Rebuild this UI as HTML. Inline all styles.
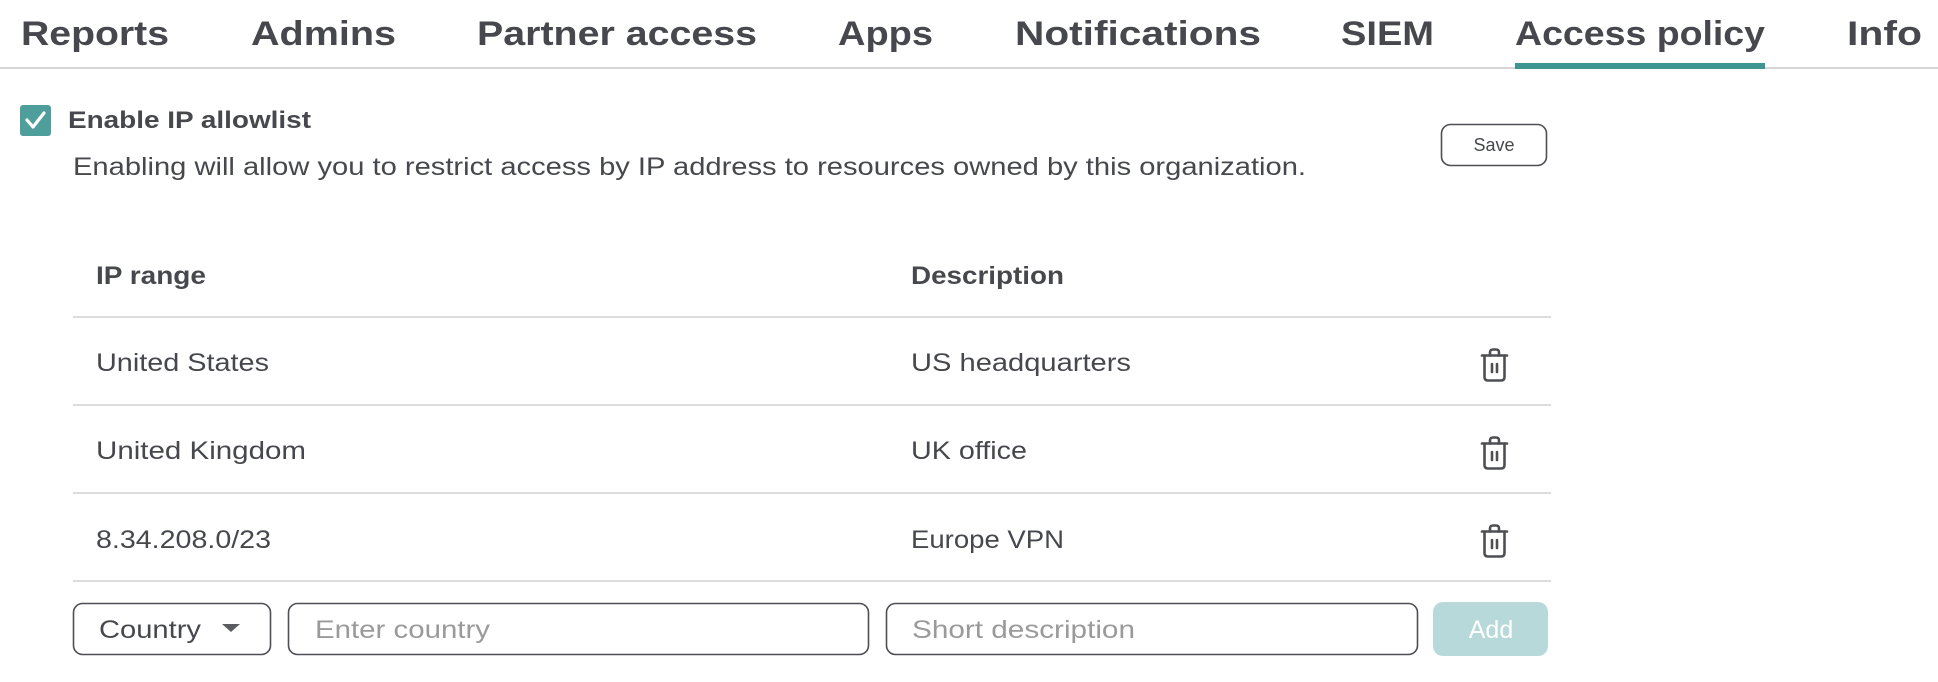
<!DOCTYPE html>
<html><head><meta charset="utf-8"><style>
html,body{margin:0;padding:0;background:#fff;width:1938px;height:682px;overflow:hidden}
svg{display:block}
text{font-family:"Liberation Sans",sans-serif;fill:#46484d}
</style></head><body>
<svg width="1938" height="682" viewBox="0 0 1938 682" xmlns="http://www.w3.org/2000/svg">
<defs>
<g id="trash" fill="none" stroke="#4d4f54" stroke-width="2.6" stroke-linecap="round" stroke-linejoin="round">
<path d="M1 7.5H26"/>
<path d="M9 7.5V4.5Q9 1.5 12 1.5H15Q18 1.5 18 4.5V7.5"/>
<path d="M3.5 7.5V29Q3.5 32.5 7 32.5H20Q23.5 32.5 23.5 29V7.5"/>
<path d="M11 16V24M16 16V24"/>
</g>
</defs>
<g font-weight="bold" font-size="34">
<text x="21" y="45" textLength="148" lengthAdjust="spacingAndGlyphs">Reports</text>
<text x="251" y="45" textLength="145" lengthAdjust="spacingAndGlyphs">Admins</text>
<text x="477" y="45" textLength="280" lengthAdjust="spacingAndGlyphs">Partner access</text>
<text x="838" y="45" textLength="95" lengthAdjust="spacingAndGlyphs">Apps</text>
<text x="1015" y="45" textLength="246" lengthAdjust="spacingAndGlyphs">Notifications</text>
<text x="1341" y="45" textLength="93" lengthAdjust="spacingAndGlyphs">SIEM</text>
<text x="1515" y="45" textLength="250" lengthAdjust="spacingAndGlyphs">Access policy</text>
<text x="1847" y="45" textLength="75" lengthAdjust="spacingAndGlyphs">Info</text>
</g>
<rect x="0" y="67" width="1938" height="2" fill="#d6d6d6"/>
<rect x="1515" y="63" width="250" height="6" fill="#3f9592"/>
<rect x="20" y="105" width="31" height="31" rx="3" fill="#4e9e9c"/>
<path d="M27 120L33 127L44 113" fill="none" stroke="#fff" stroke-width="3.2" stroke-linecap="round" stroke-linejoin="round"/>
<text x="68" y="128" font-size="24" font-weight="bold" textLength="243" lengthAdjust="spacingAndGlyphs">Enable IP allowlist</text>
<text x="73" y="175" font-size="25" textLength="1233" lengthAdjust="spacingAndGlyphs">Enabling will allow you to restrict access by IP address to resources owned by this organization.</text>
<rect x="1441.5" y="124.5" width="105" height="41" rx="9" fill="#fff" stroke="#4d4f54" stroke-width="1.6"/>
<text x="1494" y="151" font-size="18" text-anchor="middle">Save</text>
<text x="96" y="284" font-size="25" font-weight="bold" textLength="110" lengthAdjust="spacingAndGlyphs">IP range</text>
<text x="911" y="284" font-size="25" font-weight="bold" textLength="153" lengthAdjust="spacingAndGlyphs">Description</text>
<rect x="73" y="316" width="1478" height="2" fill="#dcdcdc"/>
<rect x="73" y="404" width="1478" height="2" fill="#dcdcdc"/>
<rect x="73" y="492" width="1478" height="2" fill="#dcdcdc"/>
<rect x="73" y="580" width="1478" height="2" fill="#dcdcdc"/>
<g font-size="25">
<text x="96" y="371" textLength="173" lengthAdjust="spacingAndGlyphs">United States</text>
<text x="911" y="371" textLength="220" lengthAdjust="spacingAndGlyphs">US headquarters</text>
<text x="96" y="459" textLength="210" lengthAdjust="spacingAndGlyphs">United Kingdom</text>
<text x="911" y="459" textLength="116" lengthAdjust="spacingAndGlyphs">UK office</text>
<text x="96" y="548" textLength="175" lengthAdjust="spacingAndGlyphs">8.34.208.0/23</text>
<text x="911" y="548" textLength="153" lengthAdjust="spacingAndGlyphs">Europe VPN</text>
</g>
<use href="#trash" x="1481" y="348"/>
<use href="#trash" x="1481" y="436"/>
<use href="#trash" x="1481" y="524"/>
<rect x="73.5" y="603.5" width="197" height="51" rx="9" fill="#fff" stroke="#4d4f54" stroke-width="1.6"/>
<text x="99" y="638" font-size="25" textLength="102" lengthAdjust="spacingAndGlyphs">Country</text>
<path d="M222 624H240L231 632Z" fill="#5a5c60"/>
<rect x="288.5" y="603.5" width="580" height="51" rx="9" fill="#fff" stroke="#4d4f54" stroke-width="1.6"/>
<text x="315" y="638" font-size="25" style="fill:#9a9a9a" textLength="175" lengthAdjust="spacingAndGlyphs">Enter country</text>
<rect x="886.5" y="603.5" width="531" height="51" rx="9" fill="#fff" stroke="#4d4f54" stroke-width="1.6"/>
<text x="912" y="638" font-size="25" style="fill:#9a9a9a" textLength="223" lengthAdjust="spacingAndGlyphs">Short description</text>
<rect x="1433" y="602" width="115" height="54" rx="10" fill="#b8d9da"/>
<text x="1491" y="638" font-size="25" text-anchor="middle" style="fill:#fff">Add</text>
</svg>
</body></html>
